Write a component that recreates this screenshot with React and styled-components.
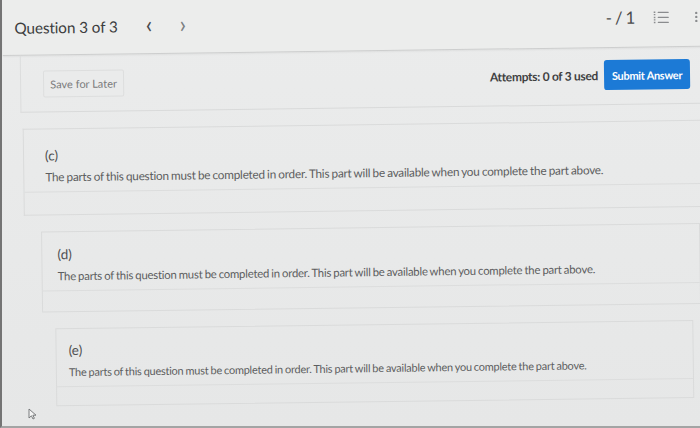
import styled, { createGlobalStyle } from "styled-components";

const GlobalStyle = createGlobalStyle`
  html, body {
    margin: 0;
    padding: 0;
  }
  body {
    width: 700px;
    height: 428px;
    overflow: hidden;
    background: #e9eaea;
    font-family: Lato, "Noto Sans", sans-serif;
  }
`;

// indent / padding per part, the lower ones sit a little further in
const parts = [
  { id: "c", indent: 19, right: 0, padTop: 18, padLeft: 21, size: 11.8, strip: 22 },
  { id: "d", indent: 36, right: 5, padTop: 14, padLeft: 15, size: 11.4, strip: 20 },
  { id: "e", indent: 49, right: 13, padTop: 13, padLeft: 12, size: 11, strip: 18 },
];

const lockedText =
  "The parts of this question must be completed in order. This part will be available when you complete the part above.";

function ListIcon() {
  return (
    <svg width="18" height="16" viewBox="0 0 18 16" fill="none">
      <g stroke="#8a8c8e" strokeWidth="1.2" strokeLinecap="round">
        <line x1="6" y1="3" x2="16" y2="3" />
        <line x1="6" y1="8" x2="16" y2="8" />
        <line x1="6" y1="13" x2="16" y2="13" />
      </g>
      <g fill="#8a8c8e">
        <rect x="1.5" y="2" width="1.6" height="1.6" />
        <rect x="1.5" y="4.6" width="1.6" height="1.2" />
        <rect x="1.5" y="7.2" width="1.6" height="1.6" />
        <rect x="1.5" y="9.8" width="1.6" height="1.2" />
        <rect x="1.5" y="12.2" width="1.6" height="1.6" />
      </g>
    </svg>
  );
}

function MoreIcon() {
  return (
    <MoreSvg width="4" height="14" viewBox="0 0 4 14">
      <g fill="#8a8c8e">
        <circle cx="2" cy="3" r="1.2" />
        <circle cx="2" cy="7" r="1.2" />
        <circle cx="2" cy="11" r="1.2" />
      </g>
    </MoreSvg>
  );
}

function Pointer() {
  return (
    <svg width="9" height="12" viewBox="0 0 9 12">
      <path
        d="M1 1 L1 10 L3.4 7.8 L5 11 L6.4 10.3 L4.9 7.2 L8 7.2 Z"
        fill="#f4f4f4"
        stroke="#6d6f72"
        strokeWidth="0.9"
        strokeLinejoin="round"
      />
    </svg>
  );
}

function App() {
  return (
    <Screen>
      <GlobalStyle />
      <Tilt>
        <Header>
          <Title>Question 3 of 3</Title>
          <Chevrons>
            <Chevron>‹</Chevron>
            <Chevron $light>›</Chevron>
          </Chevrons>
          <HeaderRight>
            <Score>- / 1</Score>
            <ListIcon />
            <MoreIcon />
          </HeaderRight>
        </Header>

        <Toolbar>
          <SaveButton>Save for Later</SaveButton>
          <ToolbarRight>
            <Attempts>Attempts: 0 of 3 used</Attempts>
            <SubmitButton>Submit Answer</SubmitButton>
          </ToolbarRight>
        </Toolbar>

        <PartList>
          {parts.map((part) => (
            <PartCard key={part.id} $indent={part.indent} $right={part.right}>
              <PartBody $padTop={part.padTop} $padLeft={part.padLeft}>
                <PartLabel>({part.id})</PartLabel>
                <PartText $size={part.size}>{lockedText}</PartText>
              </PartBody>
              <AnswerStrip $height={part.strip} />
            </PartCard>
          ))}
        </PartList>
      </Tilt>
      <Cursor>
        <Pointer />
      </Cursor>
    </Screen>
  );
}

const Screen = styled.div`
  position: relative;
  width: 700px;
  height: 428px;
  box-sizing: border-box;
  overflow: hidden;
  border-left: 2px solid #747474;
  border-bottom: 2px solid #a3a4a4;
  background: linear-gradient(180deg, #ebecec 0%, #e8e9e9 60%, #e6e7e7 100%);
`;

const Tilt = styled.div`
  width: 720px;
  transform: rotate(-0.75deg);
  transform-origin: 0 0;
`;

const Header = styled.header`
  display: flex;
  align-items: center;
  height: 55px;
  padding: 0 0 0 12px;
  border-bottom: 1px solid #cdcece;
  background: #ecedec;
  box-shadow: 0 1px 2px rgba(0, 0, 0, 0.05);
`;

const Title = styled.h1`
  margin: 0;
  font-size: 15.3px;
  font-weight: 400;
  color: #3c3d3e;
  letter-spacing: -0.1px;
`;

const Chevrons = styled.div`
  display: flex;
  gap: 27px;
  margin-left: 28px;
`;

const Chevron = styled.span`
  font-size: 24px;
  line-height: 1;
  color: ${(p) => (p.$light ? "#7d7f81" : "#4a4b4c")};
  padding-bottom: 4px;
`;

const HeaderRight = styled.div`
  display: flex;
  align-items: center;
  gap: 17px;
  margin-left: auto;
  margin-right: 24px;
  padding-bottom: 4px;
`;

const Score = styled.span`
  font-size: 17px;
  color: #4b4c4d;
  word-spacing: -1.5px;
`;

const MoreSvg = styled.svg`
  margin-left: 7px;
`;

const Toolbar = styled.div`
  display: flex;
  align-items: center;
  justify-content: space-between;
  height: 56px;
  margin-left: 17px;
  padding: 0 33px 0 22px;
  border-left: 1px solid #dcdddd;
  border-bottom: 1px solid #d9dada;
`;

const SaveButton = styled.button`
  width: 81px;
  height: 27px;
  padding: 0;
  border: 1px solid #dddede;
  border-radius: 2px;
  background: #eaebeb;
  font-family: Lato, "Noto Sans", sans-serif;
  font-size: 11px;
  color: #7a7b7c;
`;

const ToolbarRight = styled.div`
  display: flex;
  align-items: center;
  gap: 6px;
  padding-bottom: 2px;
`;

const Attempts = styled.span`
  font-size: 12px;
  font-weight: 700;
  color: #3f4142;
  letter-spacing: -0.3px;
`;

const SubmitButton = styled.button`
  width: 86px;
  height: 30px;
  padding: 0;
  border: none;
  border-radius: 3px;
  background: #1c7ad6;
  font-family: Lato, "Noto Sans", sans-serif;
  font-size: 11px;
  font-weight: 700;
  letter-spacing: -0.3px;
  color: #ffffff;
`;

const PartList = styled.div`
  display: flex;
  flex-direction: column;
  gap: 16px;
  margin-top: 16px;
`;

const PartCard = styled.section`
  margin-left: ${(p) => p.$indent}px;
  margin-right: ${(p) => p.$right + 20}px;
  border: 1px solid #dadbdb;
  border-right-color: ${(p) => (p.$right ? "#dadbdb" : "transparent")};
`;

const PartBody = styled.div`
  display: flex;
  flex-direction: column;
  gap: 7px;
  padding: ${(p) => p.$padTop}px 16px 7px ${(p) => p.$padLeft}px;
  border-bottom: 1px solid #dcdddd;
`;

const PartLabel = styled.span`
  font-size: 13.5px;
  line-height: 16px;
  color: #4f5051;
`;

const PartText = styled.p`
  margin: 0;
  font-size: ${(p) => p.$size}px;
  line-height: 14px;
  color: #5d5e60;
  letter-spacing: -0.25px;
  word-spacing: -0.5px;
`;

const AnswerStrip = styled.div`
  height: ${(p) => p.$height}px;
`;

const Cursor = styled.div`
  position: absolute;
  left: 26px;
  top: 408px;
  line-height: 0;
`;

export default App;
